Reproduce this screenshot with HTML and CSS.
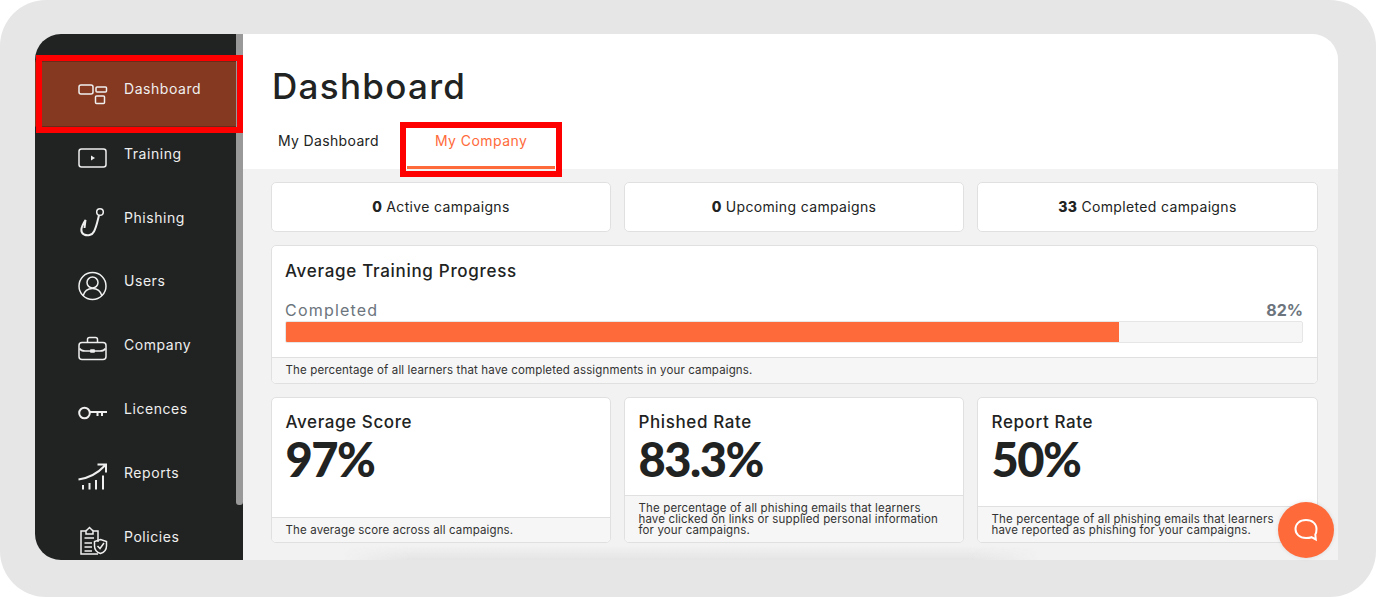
FILE: index.html

```html
<!DOCTYPE html>
<html lang="en">
<head>
  <meta charset="UTF-8" />
  <meta name="viewport" content="width=device-width, initial-scale=1.0"/>
  <title>Dashboard</title>
  <link rel="stylesheet" href="styles.css">
</head>
<body>
  <div class="frame">
    <div class="app">
      <div class="sidebar">
        <ul>
          <li class="active">
            <svg viewBox="0 0 30 30"><rect x="1" y="6" width="14" height="9" rx="2"/><rect x="18" y="8" width="10.5" height="5" rx="1"/><rect x="17.5" y="17" width="9" height="7.5" rx="1"/></svg>
            <a href="#">Dashboard</a>
          </li>
          <li>
            <svg viewBox="0 0 30 30"><rect x="1" y="6" width="27" height="18" rx="2.5"/><path d="M13 12.5 L17 15 L13 17.5 Z" class="solid"/></svg>
            <a href="#">Training</a>
          </li>
          <li>
            <svg viewBox="0 0 30 30"><circle cx="22" cy="5" r="3.3"/><path d="M21 8.3 C19.500 14 18.500 20 16 24.500 C14 28.500 9.500 29 6 27.500 C2.500 25.500 2 21.500 7.500 13 L6.500 21" class="thick"/></svg>
            <a href="#">Phishing</a>
          </li>
          <li>
            <svg viewBox="0 0 30 30"><circle cx="14.500" cy="15" r="13.500"/><circle cx="14.500" cy="11.500" r="5.500"/><path d="M5 25 C6.500 19.500 10 17.500 14.500 17.500 C19 17.500 22.500 19.500 24 25"/></svg>
            <a href="#">Users</a>
          </li>
          <li>
            <svg viewBox="0 0 30 30"><path d="M9.500 8.500 V5.500 Q9.500 3.500 11.500 3.500 H17.500 Q19.500 3.500 19.500 5.500 V8.500"/><rect x="1" y="8.500" width="27" height="17" rx="3"/><path d="M1.500 14.500 Q3 17 7 17 H12 M17 17 H22 Q26 17 27.500 14.500"/><rect x="12" y="15.300" width="5" height="3.400" rx="1" class="solid"/></svg>
            <a href="#">Company</a>
          </li>
          <li>
            <svg viewBox="0 0 30 30"><circle cx="6.500" cy="15" r="5.300" class="thick"/><path d="M11.800 14 H29" class="thick"/><path d="M19.500 14 V18 M24 14 V18" class="thick"/></svg>
            <a href="#">Licences</a>
          </li>
          <li>
            <svg viewBox="0 0 30 30"><path d="M0.500 17.500 C11 16 20 11 27 3.500 M19.500 2.500 H28 V10.500" class="thick"/><path d="M5 23 V27.500 M11.500 21 V27.500 M18 18 V27.500 M25 13.500 V27.500" class="thick"/></svg>
            <a href="#">Reports</a>
          </li>
          <li>
            <svg viewBox="0 0 30 30"><path d="M8 5 H3 V28 H20 M20 16 V5 H15 M8 8 V5 Q8 4 9 4 L11.500 1.500 L14 4 Q15 4 15 5 V8 Z"/><path d="M6.500 12 H16 M6.500 17 H14 M6.500 21 H14 M6.500 25 H14"/><path d="M22.500 13.500 L28.500 15.500 V20 C28.500 24 25.500 26.500 22.500 27.500 C19.500 26.500 16.500 24 16.500 20 V15.500 Z"/><path d="M19.500 20 L22 22.500 L26 17"/></svg>
            <a href="#">Policies</a>
          </li>
        </ul>
        <div class="scroll-thumb"></div>
        <div class="mark mark-nav"></div>
      </div>

      <div class="main">
        <div class="header">
          <h1>Dashboard</h1>
          <div class="tabs">
            <a href="#" class="tab">My Dashboard</a>
            <a href="#" class="tab tab-active">My Company<span class="mark mark-tab"></span></a>
          </div>
        </div>

        <div class="content">
          <div class="row">
            <div class="card stat"><b>0</b> Active campaigns</div>
            <div class="card stat"><b>0</b> Upcoming campaigns</div>
            <div class="card stat"><b>33</b> Completed campaigns</div>
          </div>

          <div class="card">
            <div class="card-body progress-body">
              <h3>Average Training Progress</h3>
              <div class="progress-labels">
                <span>Completed</span>
                <b>82%</b>
              </div>
              <div class="bar"><div class="bar-fill" style="width: 82%"></div></div>
            </div>
            <div class="card-foot">The percentage of all learners that have completed assignments in your campaigns.</div>
          </div>

          <div class="row">
            <div class="card metric">
              <div class="card-body">
                <h3>Average Score</h3>
                <div class="value">97%</div>
              </div>
              <div class="card-foot">The average score across all campaigns.</div>
            </div>
            <div class="card metric">
              <div class="card-body">
                <h3>Phished Rate</h3>
                <div class="value">83.3%</div>
              </div>
              <div class="card-foot">The percentage of all phishing emails that learners have clicked on links or supplied personal information for your campaigns.</div>
            </div>
            <div class="card metric">
              <div class="card-body">
                <h3>Report Rate</h3>
                <div class="value">50%</div>
              </div>
              <div class="card-foot">The percentage of all phishing emails that learners have reported as phishing for your campaigns.</div>
            </div>
          </div>
        </div>
        <div class="bottom-fade"></div>
      </div>

      <button class="chat-btn" aria-label="Chat">
        <svg viewBox="0 0 26 26"><path d="M13 3 C6.500 3 2.500 7 2.500 12 C2.500 17 6.500 21 13 21 C15 21 17 20.800 18.500 20.200 L22.800 22.500 L22.300 17.500 C23.300 16 23.500 14 23.500 12 C23.500 7 19.500 3 13 3 Z"/></svg>
      </button>
    </div>
  </div>
</body>
</html>
```

FILE: styles.css

```css
* { margin: 0; padding: 0; box-sizing: border-box; }
body {
  font-family: Inter, 'Liberation Sans', sans-serif;
  background: #fff;
  color: #212322;
  height: 597px;
  overflow: hidden;
}
a { color: inherit; text-decoration: none; }

.frame {
  height: 597px;
  background: #e6e6e6;
  border-radius: 46px;
  padding: 34px 38px 37px 35px;
}
.app {
  position: relative;
  display: flex;
  height: 526px;
}

/* Sidebar */
.sidebar {
  position: relative;
  width: 208px;
  background: #212322;
  border-radius: 26px 0 0 26px;
  padding-top: 28px;
  overflow: hidden;
}
.sidebar ul { list-style: none; width: 201px; }
.sidebar li {
  display: flex;
  align-items: center;
  height: 63.85px;
  padding-left: 43px;
  color: #efefef;
}
.sidebar li.active {
  height: 64px;
  background: #853920;
  box-shadow: 0 -2px 0 #6a2c1a, 0 1px 0 #6a2c1a;
}
.sidebar li a {
  font-size: 14px;
  letter-spacing: 0.55px;
  margin-left: 16px;
  margin-bottom: 9.4px;
}
.sidebar li.active a { margin-bottom: 11px; }
.sidebar svg {
  width: 30px;
  height: 30px;
  flex: none;
  fill: none;
  stroke: #efefef;
  stroke-width: 1.5;
}
.sidebar svg .solid { fill: #efefef; stroke: none; }
.sidebar svg .thick { stroke-width: 2; }
.scroll-thumb {
  position: absolute;
  top: 0;
  right: 0;
  width: 7px;
  height: 471px;
  background: #999;
  border-radius: 0 0 3px 3px;
}

/* Red callouts */
.mark { position: absolute; border: 6px solid #f00; pointer-events: none; }
.mark-nav { left: 1px; top: 21px; width: 207px; height: 78px; }
.mark-tab { left: -7px; right: -7px; top: -2px; height: 55px; }

/* Main */
.main {
  position: relative;
  flex: 1;
  display: flex;
  flex-direction: column;
  background: #f2f2f2;
  border-radius: 0 26px 0 0;
  overflow: hidden;
}
.header {
  background: #fff;
  height: 135px;
  padding: 30px 0 0 29px;
}
.header h1 {
  font-size: 35px;
  font-weight: 500;
  line-height: 44px;
  letter-spacing: 1.3px;
}
.tabs { display: flex; margin-top: 16px; }
.tab {
  position: relative;
  display: block;
  height: 45px;
  padding: 8px 6px 0;
  font-size: 14px;
  letter-spacing: 0.35px;
  line-height: 18px;
}
.tab-active {
  margin-left: 22px;
  padding: 8px 28px 0;
  color: #ff6a3a;
  letter-spacing: 0.45px;
  border-bottom: 3px solid #ff6a3a;
}

.content {
  flex: 1;
  display: flex;
  flex-direction: column;
  gap: 13px;
  padding: 13px 20px 17px 28px;
}
.row {
  display: grid;
  grid-template-columns: 340px 340px 341px;
  gap: 13px;
}
.card {
  display: flex;
  flex-direction: column;
  background: #fff;
  border: 1px solid #e0e0e0;
  border-radius: 5px;
  overflow: hidden;
}
.card-body { flex: 1; padding: 13px 13px 0 13.5px; }
.card h3 {
  font-size: 17px;
  font-weight: 500;
  line-height: 22px;
  letter-spacing: 0.6px;
}
.card-foot {
  background: #f6f6f6;
  border-top: 1px solid #e0e0e0;
  font-size: 11.5px;
  letter-spacing: 0.14px;
  line-height: 11px;
  padding: 7px 19px 6px 13.5px;
  color: #333;
}

.stat {
  height: 50px;
  align-items: center;
  flex-direction: row;
  justify-content: center;
  gap: 4px;
  padding-bottom: 2px;
  font-size: 14px;
  letter-spacing: 0.35px;
}
.stat b { font-weight: 800; }

.progress-body { height: 111px; flex: none; padding: 13.5px 14px 0 13px; }
.progress-body h3 { letter-spacing: 0.7px; }
.progress-labels {
  display: flex;
  justify-content: space-between;
  align-items: center;
  margin-top: 18.5px;
  color: #6c757d;
  font-size: 16px;
  letter-spacing: 1.2px;
  line-height: 20px;
}
.progress-labels b { font-size: 16px; font-weight: 700; letter-spacing: 0; }
.bar {
  height: 22px;
  margin-top: 1px;
  background: #f6f6f6;
  border: 1px solid #e6e6e6;
  border-radius: 2px;
  overflow: hidden;
}
.bar-fill { height: 100%; margin: -1px 0 0 0; min-height: 22px; background: #ff6a3a; }
.progress-body + .card-foot { height: 26px; padding-top: 7px; }

.metric { height: 146px; }
.value {
  font-family: Lato, Inter, sans-serif;
  font-size: 47px;
  font-weight: 900;
  letter-spacing: -1.5px;
  line-height: 52px;
}

.bottom-fade {
  position: absolute;
  left: 100px;
  right: 300px;
  bottom: 0;
  height: 14px;
  background: linear-gradient(to bottom, rgba(228,228,228,0), #e4e4e4);
  -webkit-mask-image: linear-gradient(to right, transparent, #000 10%, #000 90%, transparent);
  mask-image: linear-gradient(to right, transparent, #000 10%, #000 90%, transparent);
}

.chat-btn {
  position: absolute;
  right: 4px;
  top: 468px;
  width: 56px;
  height: 56px;
  border: none;
  border-radius: 50%;
  background: #ff6a3a;
  box-shadow: 0 0 4px rgba(0,0,0,0.1);
  display: flex;
  align-items: center;
  justify-content: center;
}
.chat-btn svg {
  width: 26px;
  height: 26px;
  fill: none;
  stroke: #fff;
  stroke-width: 2;
}
```
